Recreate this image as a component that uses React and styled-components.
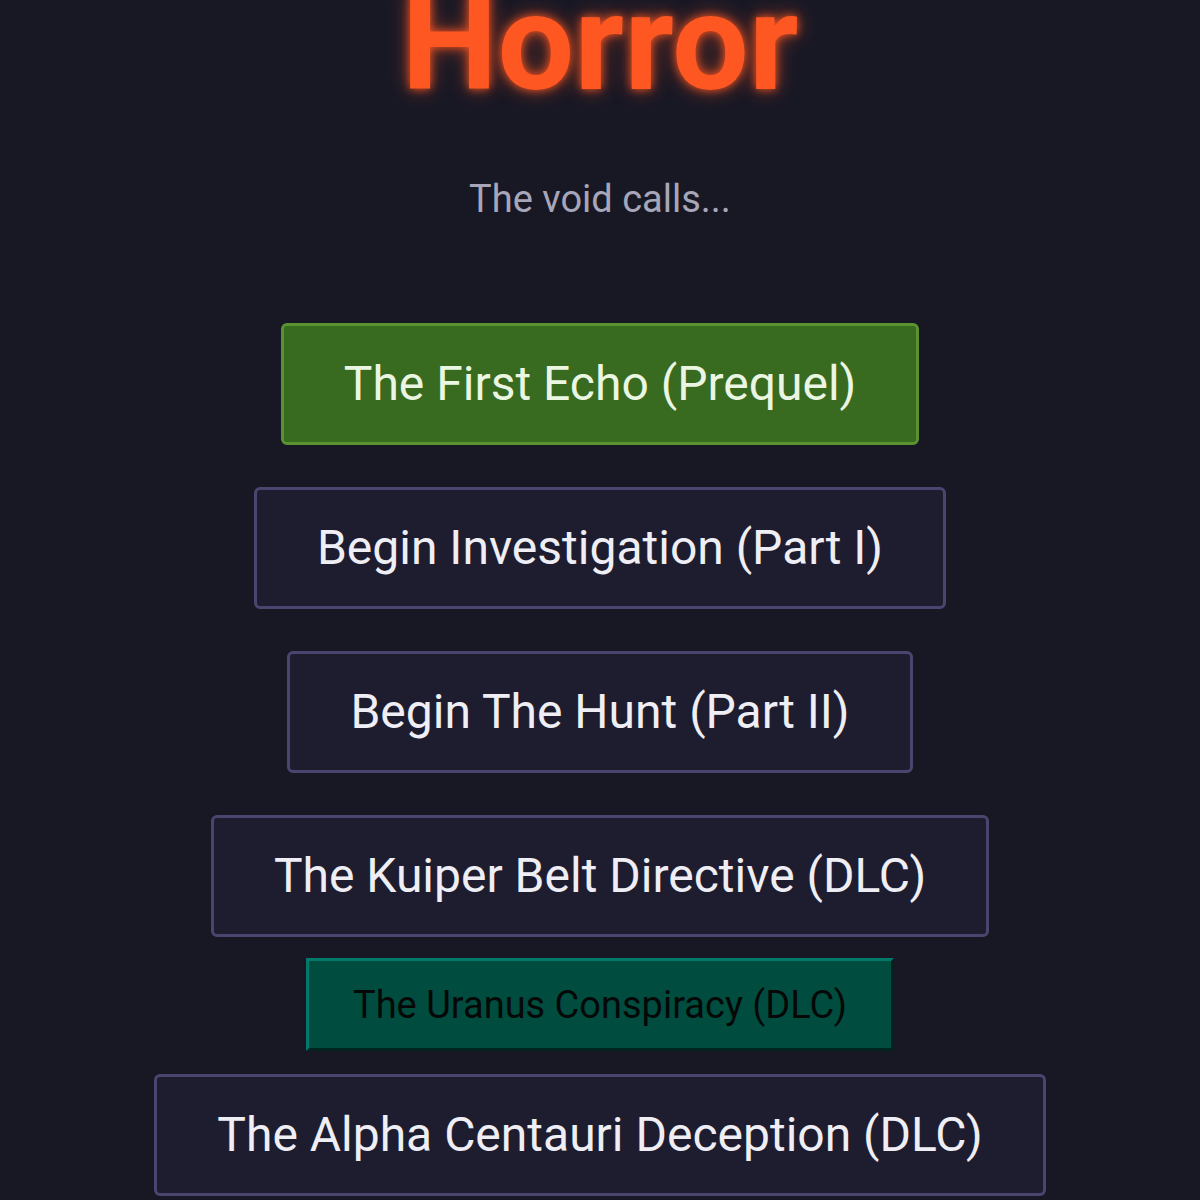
import styled, { createGlobalStyle } from 'styled-components';

const GlobalStyle = createGlobalStyle`
  html, body {
    margin: 0;
    padding: 0;
    background: #181825;
    font-family: 'Roboto', 'Liberation Sans', sans-serif;
  }
`;

const Screen = styled.main`
  min-height: 1200px;
  display: flex;
  flex-direction: column;
  align-items: center;
  overflow: hidden;
`;

const Title = styled.h1`
  margin: -37px 0 0;
  font-size: 136px;
  font-weight: 700;
  line-height: 1.172;
  color: #ff5722;
  text-shadow: 0 0 8px rgba(255, 87, 34, 0.9), 0 0 20px rgba(255, 87, 34, 0.6);
`;

const Subtitle = styled.p`
  margin: 55px 0 81px;
  font-size: 38px;
  color: #a6a6b8;
`;

const Menu = styled.nav`
  display: flex;
  flex-direction: column;
  align-items: center;
`;

const MenuButton = styled.button`
  margin: 21px 0;
  padding: 30px 60px;
  font-family: inherit;
  font-size: 48px;
  line-height: 56px;
  color: ${(p) => (p.$variant === 'green' ? '#eaf6e2' : '#eeeef4')};
  background: ${(p) => (p.$variant === 'green' ? '#386a1f' : '#1e1d30')};
  border: 3px solid ${(p) => (p.$variant === 'green' ? '#5b9231' : '#48466e')};
  border-radius: 6px;
  cursor: pointer;
`;

const DlcButton = styled.button`
  margin: 0 0 2px;
  padding: 21px 44px 20px;
  font-family: inherit;
  font-size: 38px;
  line-height: 46px;
  color: #050807;
  background: #004d40;
  border: 3px outset #00796b;
  border-radius: 0;
  cursor: pointer;
`;

const App = () => (
  <Screen>
    <GlobalStyle />
    <Title>Horror</Title>
    <Subtitle>The void calls...</Subtitle>
    <Menu>
      <MenuButton $variant="green">The First Echo (Prequel)</MenuButton>
      <MenuButton>Begin Investigation (Part I)</MenuButton>
      <MenuButton>Begin The Hunt (Part II)</MenuButton>
      <MenuButton>The Kuiper Belt Directive (DLC)</MenuButton>
      <DlcButton>The Uranus Conspiracy (DLC)</DlcButton>
      <MenuButton>The Alpha Centauri Deception (DLC)</MenuButton>
    </Menu>
  </Screen>
);

export default App;
